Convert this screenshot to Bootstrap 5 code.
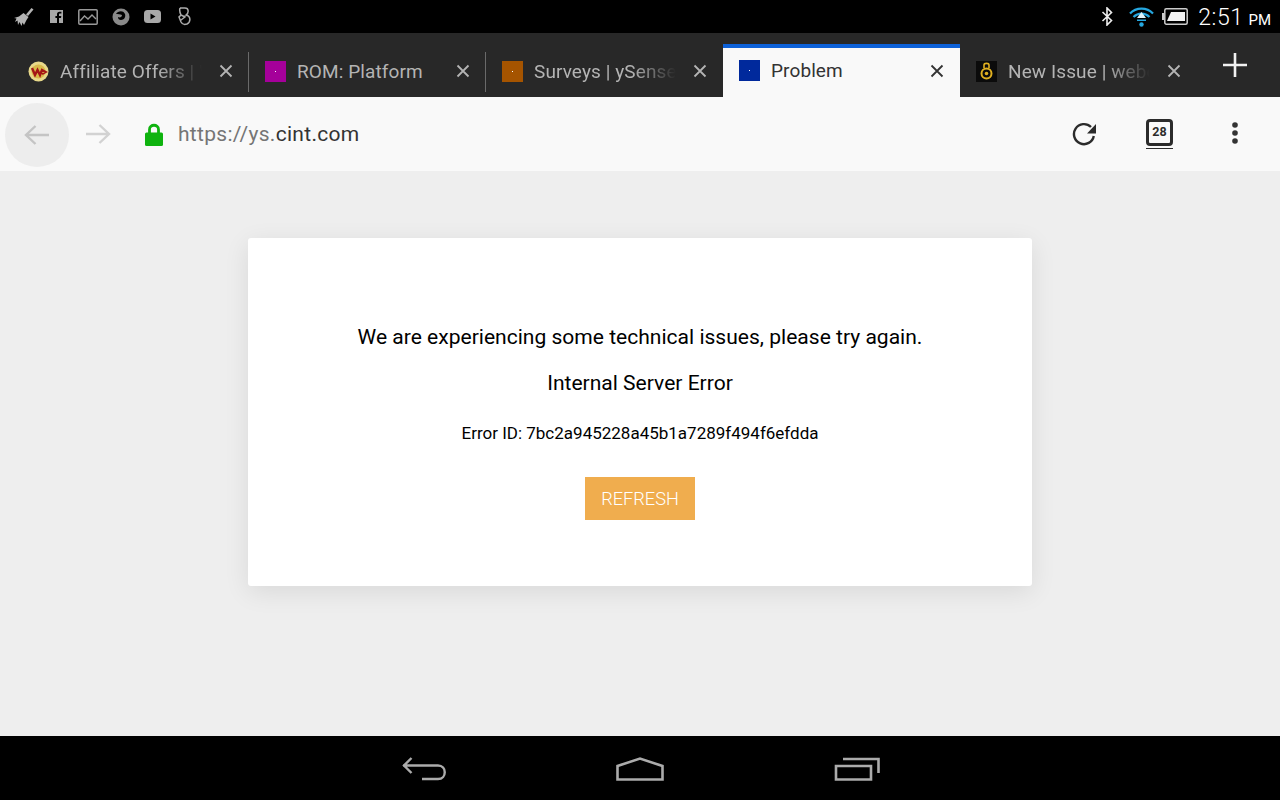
<!DOCTYPE html>
<html lang="en">
<head>
<meta charset="utf-8">
<title>Problem</title>
<link rel="stylesheet" href="https://cdn.jsdelivr.net/npm/bootstrap@5.3.0/dist/css/bootstrap.min.css">
<style>
html,body{height:800px;overflow:hidden;}
body{font-family:Roboto,"Liberation Sans",sans-serif;background:#000;}
.shell{height:800px;}
.status-bar{height:33px;background:#000;padding:0 9px 0 14px;color:#fff;}
.status-left{gap:14px;}
.push-1{margin-left:1px;}
.push-2{margin-left:2px;}
.push-3{margin-left:3px;}
.bt-icon{margin-right:7px;}
.clock{font-size:23px;line-height:33px;font-weight:300;letter-spacing:.6px;margin-left:2px;margin-top:4px;}
.clock small{font-size:15px;font-weight:400;letter-spacing:0;margin-left:1px;}
.tab-strip{height:64px;background:#282828;padding-left:12px;}
.tab-item{width:237px;height:64px;padding:12px 16px 0;flex:none;position:relative;color:#b4b4b4;font-size:19px;}
.tab-item.lined::after{content:"";position:absolute;right:0;top:19px;height:40px;width:1px;background:#6a6a6a;}
.tab-item.current{background:#f9f9f9;color:#333;border-top:4px solid #0d61d8;height:53px;margin-top:11px;padding-top:0;padding-bottom:4px;}
.fav{width:21px;height:21px;flex:none;margin-right:11px;display:flex;align-items:center;justify-content:center;}
.fav i{display:block;width:1px;height:1px;background:#fff;}
.fav-rom{background:#a5009a;}
.fav-sur{background:#a55400;}
.fav-pro{background:#00299c;}
.fav-iss{background:#0b0b0b;}
.tab-title{flex:1 1 auto;min-width:0;white-space:nowrap;overflow:hidden;line-height:24px;margin-top:1px;letter-spacing:.1px;-webkit-mask-image:linear-gradient(to right,#000 66%,transparent 96%);mask-image:linear-gradient(to right,#000 66%,transparent 96%);}
.current .tab-title,.nofade{-webkit-mask-image:none;mask-image:none;}
.tab-x{flex:none;margin-left:11px;display:block;}
.new-tab{margin-left:25px;margin-top:-1px;}
.tool-bar{height:74px;background:#f9f9f9;padding-left:5px;}
.back-disc{width:64px;height:64px;border-radius:50%;background:#ededed;margin-top:1px;}
.lock{margin-left:34px;}
.url-text{font-size:21px;color:#757575;margin-left:15px;margin-top:2px;letter-spacing:.3px;}
.url-text b{font-weight:400;color:#333;}
.tool-right{margin-left:auto;}
.tab-count{width:27px;height:27px;border:3px solid #2b2b2b;border-radius:4px;font-size:12.5px;font-weight:700;color:#2b2b2b;line-height:1;}
.count-wrap{border-bottom:1px solid #2b2b2b;padding-bottom:2px;margin:0 59px 0 48px;}
.dots{margin-right:42px;}
.page-area{height:565px;background:#eee;padding-top:67px;}
.err-card{width:784px;height:348px;background:#fff;border-radius:3px;box-shadow:0 6px 26px rgba(0,0,0,.09);color:#000;padding-top:84px;}
.msg-a{font-size:21.05px;line-height:30px;margin:0 0 16px;}
.msg-a.lastline{margin-bottom:23px;}
.msg-b{font-size:17px;line-height:24px;margin:0 0 32px;}
.btn-refresh{background:#f0ad4e;color:#fff;border:0;border-radius:0;width:110px;height:43px;padding:0;font-size:18.2px;line-height:43px;font-weight:300;}
.btn-refresh:hover{background:#f0ad4e;color:#fff;}
.nav-bar{height:64px;background:#000;gap:170px;padding:1px 0 0 1px;}
</style>
</head>
<body>
<div class="shell d-flex flex-column">
  <div class="status-bar d-flex align-items-center">
    <div class="status-left d-flex align-items-center">
      <svg width="20" height="20" viewBox="0 0 20 20"><path d="M17.5 1 L19.5 2.5 L14 9 L12 7.5Z" fill="#b4b4b4"/><path d="M9.5 6 L14.5 10 L12.5 13 L10 18 L8.5 15.5 L7.5 19 L5.5 15 L4 18 L3.5 13.5 L1 15 L2.5 11.5 L0 11 L5 9.5Z" fill="#b4b4b4"/></svg>
      <svg class="push-2" width="13" height="13" viewBox="0 0 13 13"><path d="M0 0H13V13H9V8H11L11.3 6H9V4.6C9 4 9.3 3.6 10 3.6H11.4V1.8H9.6C7.8 1.8 7 3 7 4.4V6H5.4V8H7V13H0Z" fill="#a8a8a8"/></svg>
      <svg class="push-1" width="20" height="16" viewBox="0 0 20 16"><rect x=".8" y=".8" width="18.4" height="14.4" rx="1" fill="none" stroke="#999" stroke-width="1.5"/><path d="M2 12 L6.5 7 L10 10 L14 6 L18 10" fill="none" stroke="#999" stroke-width="1.4"/></svg>
      <svg width="18" height="18" viewBox="0 0 18 18"><circle cx="9" cy="9" r="8.5" fill="#8a8a8a"/><path d="M4 6 C6 3 11 2 13 6 C14 9 12 12 9 12 C7 12 6 11 6 9 C8 10 10 9 10 7 C8 6 6 6 4 6Z" fill="#000"/></svg>
      <svg width="17" height="13" viewBox="0 0 17 13"><rect width="17" height="13" rx="3.5" fill="#a8a8a8"/><path d="M6.5 3.5 L11.5 6.5 L6.5 9.5Z" fill="#000"/></svg>
      <svg class="push-3" width="14" height="19" viewBox="0 0 14 19"><path d="M2 1 H7 C11 1 11 6 8 8 C13 9 13 15 9 17 C6 18 4 17 3 15 M2 1 C1 4 2 6 3 8 L1 10 L3 15 M3 8 L7 10 L3 13" fill="none" stroke="#aaa" stroke-width="1.5"/></svg>
    </div>
    <div class="ms-auto d-flex align-items-center gap-2">
      <svg class="bt-icon" width="13" height="19" viewBox="0 0 13 19"><path d="M1.5 5 L10.5 13.5 L6 18 V1 L10.5 5.5 L1.5 14" fill="none" stroke="#eee" stroke-width="1.6"/></svg>
      <svg width="25" height="21" viewBox="0 0 25 21"><g fill="none" stroke="#25a7e0" stroke-width="2.2"><path d="M1 7.5 C7 1 18 1 24 7.5"/><path d="M4.5 11 C9 6.5 16 6.5 20.5 11"/></g><path d="M12.5 6 L17 12 H8Z" fill="#dff3fb"/><path d="M8 13.5 H17 V15 H8Z" fill="#25a7e0"/><circle cx="12.5" cy="18.5" r="2.2" fill="#25a7e0"/></svg>
      <svg width="26" height="17" viewBox="0 0 26 17"><rect x="0" y="5" width="2" height="7" fill="#ccc"/><rect x="2.8" y=".8" width="22.4" height="15.4" rx="1.5" fill="none" stroke="#ccc" stroke-width="1.5"/><path d="M9 4 H23 V13 H5Z" fill="#f2f2f2"/></svg>
      <div class="clock">2:51<small> PM</small></div>
    </div>
  </div>

  <div class="tab-strip d-flex">
    <div class="tab-item lined d-flex align-items-center">
      <span class="fav"><svg width="21" height="21" viewBox="0 0 21 21"><circle cx="10.5" cy="10.5" r="10" fill="#e8d98a"/><circle cx="10.5" cy="10.5" r="7" fill="#d8b94a"/><path d="M4 7 L7 14 L9.5 9 L12 14 L14 9 L17.5 11 L14 13" fill="none" stroke="#a51616" stroke-width="2.4"/></svg></span>
      <span class="tab-title">Affiliate Offers | WarriorPlus</span>
      <svg class="tab-x" width="14" height="14" viewBox="0 0 14 14"><path d="M1.5 1.5 L12.5 12.5 M12.5 1.5 L1.5 12.5" stroke="#b4b4b4" stroke-width="1.8"/></svg>
    </div>
    <div class="tab-item lined d-flex align-items-center">
      <span class="fav fav-rom"><i></i></span>
      <span class="tab-title nofade">ROM: Platform</span>
      <svg class="tab-x" width="14" height="14" viewBox="0 0 14 14"><path d="M1.5 1.5 L12.5 12.5 M12.5 1.5 L1.5 12.5" stroke="#b4b4b4" stroke-width="1.8"/></svg>
    </div>
    <div class="tab-item d-flex align-items-center">
      <span class="fav fav-sur"><i></i></span>
      <span class="tab-title">Surveys | ySense</span>
      <svg class="tab-x" width="14" height="14" viewBox="0 0 14 14"><path d="M1.5 1.5 L12.5 12.5 M12.5 1.5 L1.5 12.5" stroke="#b4b4b4" stroke-width="1.8"/></svg>
    </div>
    <div class="tab-item current d-flex align-items-center">
      <span class="fav fav-pro"><i></i></span>
      <span class="tab-title">Problem</span>
      <svg class="tab-x" width="14" height="14" viewBox="0 0 14 14"><path d="M1.5 1.5 L12.5 12.5 M12.5 1.5 L1.5 12.5" stroke="#333" stroke-width="1.8"/></svg>
    </div>
    <div class="tab-item d-flex align-items-center">
      <span class="fav fav-iss"><svg width="13" height="18" viewBox="0 0 13 18"><path d="M4 6 V3 C4 .8 9 .8 9 3 V6" fill="none" stroke="#e0b020" stroke-width="1.6"/><circle cx="6.5" cy="11.5" r="5" fill="none" stroke="#e0b020" stroke-width="2"/><circle cx="6.5" cy="11.5" r="1.8" fill="#e0b020"/></svg></span>
      <span class="tab-title">New Issue | webcompat</span>
      <svg class="tab-x" width="14" height="14" viewBox="0 0 14 14"><path d="M1.5 1.5 L12.5 12.5 M12.5 1.5 L1.5 12.5" stroke="#b4b4b4" stroke-width="1.8"/></svg>
    </div>
    <div class="new-tab d-flex align-items-center">
      <svg width="26" height="26" viewBox="0 0 26 26"><path d="M13 1 V25 M1 13 H25" stroke="#f2f2f2" stroke-width="2.6"/></svg>
    </div>
  </div>

  <div class="tool-bar d-flex align-items-center">
    <div class="back-disc d-flex align-items-center justify-content-center">
      <svg width="26" height="22" viewBox="0 0 26 22"><path d="M25 11 H2 M11.5 2 L2 11 L11.5 20" fill="none" stroke="#c4c4c4" stroke-width="2.4"/></svg>
    </div>
    <svg class="ms-3" width="26" height="22" viewBox="0 0 26 22"><path d="M1 11 H24 M14.5 2 L24 11 L14.5 20" fill="none" stroke="#d2d2d2" stroke-width="2.4"/></svg>
    <svg class="lock" width="18" height="23" viewBox="0 0 18 23"><path d="M4.5 10 V6.5 C4.5 .8 13.5 .8 13.5 6.5 V10" fill="none" stroke="#0fb30f" stroke-width="2.8"/><rect x="0" y="9.5" width="18" height="13.5" rx="1.5" fill="#0fb30f"/></svg>
    <div class="url-text">https://ys.<b>cint.com</b></div>
    <div class="tool-right d-flex align-items-center">
      <svg width="26" height="26" viewBox="0 0 26 26"><path d="M19 6 A10 10 0 1 0 21.8 15" fill="none" stroke="#2b2b2b" stroke-width="2.4"/><path d="M24 3 V12.5 H15Z" fill="#2b2b2b"/></svg>
      <div class="count-wrap"><div class="tab-count d-flex align-items-center justify-content-center">28</div></div>
      <svg class="dots" width="6" height="24" viewBox="0 0 6 24"><circle cx="3" cy="3" r="2.8" fill="#333"/><circle cx="3" cy="11" r="2.8" fill="#333"/><circle cx="3" cy="19" r="2.8" fill="#333"/></svg>
    </div>
  </div>

  <div class="page-area d-flex justify-content-center">
    <div class="err-card text-center">
      <p class="msg-a">We are experiencing some technical issues, please try again.</p>
      <p class="msg-a lastline">Internal Server Error</p>
      <p class="msg-b">Error ID: 7bc2a945228a45b1a7289f494f6efdda</p>
      <button type="button" class="btn btn-refresh">REFRESH</button>
    </div>
  </div>

  <div class="nav-bar d-flex align-items-center justify-content-center">
    <svg width="44" height="24" viewBox="0 0 44 24"><path d="M1 8.5 H36 C45 8.5 45 22 36 22 H20 M9.5 1 L2 8.5 L9.5 16" fill="none" stroke="#ababab" stroke-width="2.4"/></svg>
    <svg width="48" height="24" viewBox="0 0 48 24"><path d="M1.5 22.5 V9 L24 1.5 L46.5 9 V22.5Z" fill="none" stroke="#ababab" stroke-width="2.6"/></svg>
    <svg width="46" height="24" viewBox="0 0 46 24"><path d="M2 9 H37 V22.5 H2Z" fill="none" stroke="#ababab" stroke-width="2.6"/><path d="M9 2 H44.5 V16" fill="none" stroke="#ababab" stroke-width="2.6"/></svg>
  </div>
</div>
<script src="https://cdn.jsdelivr.net/npm/bootstrap@5.3.0/dist/js/bootstrap.bundle.min.js"></script>
</body>
</html>
